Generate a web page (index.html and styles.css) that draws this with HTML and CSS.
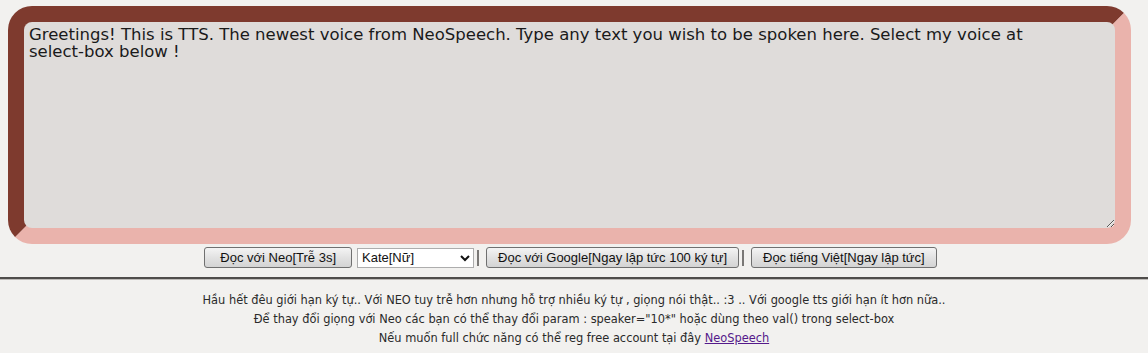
FILE: index.html
```html
<!DOCTYPE html>
<html lang="vi">
<head>
    <meta charset="UTF-8">
    <title>TTS NeoSpeech</title>
    <link rel="stylesheet" href="styles.css">
</head>
<body>
    <div class="wrap">
        <textarea id="text" class="tts-box">Greetings! This is TTS. The newest voice from NeoSpeech. Type any text you wish to be spoken here. Select my voice at select-box below !</textarea>
    </div>

    <div class="controls">
        <button type="button" class="btn btn-neo">Đọc với Neo[Trễ 3s]</button>
        <select class="voice">
            <option value="10">Kate[Nữ]</option>
            <option value="11">Paul[Nam]</option>
        </select>
        <span class="sep"></span>
        <button type="button" class="btn">Đọc với Google[Ngay lập tức 100 ký tự]</button>
        <span class="sep"></span>
        <button type="button" class="btn">Đọc tiếng Việt[Ngay lập tức]</button>
    </div>

    <hr class="line">

    <div class="notes">
        <p>Hầu hết đêu giới hạn ký tự.. Với NEO tuy trễ hơn nhưng hỗ trợ nhiều ký tự , giọng nói thật.. :3 .. Với google tts giới hạn ít hơn nữa..</p>
        <p>Để thay đổi giọng với Neo các bạn có thể thay đổi param : speaker="10*" hoặc dùng theo val() trong select-box</p>
        <p>Nếu muốn full chức năng có thể reg free account tại đây <a href="#">NeoSpeech</a></p>
    </div>
</body>
</html>
```

FILE: styles.css
```css
body {
    margin: 6px 0 0;
    background-color: #f2f1ef;
    font-family: "DejaVu Sans", Verdana, sans-serif;
    color: #222;
}
.wrap {
    padding-left: 8px;
}
.tts-box {
    display: block;
    box-sizing: border-box;
    width: 1123px;
    height: 238px;
    padding: 4px 40px 4px 5px;
    border: 16px solid;
    border-color: #7e3a2e #eab3ac #eab3ac #7e3a2e;
    border-radius: 24px;
    background-color: #dfdcda;
    color: #1a1a1a;
    font-family: "DejaVu Sans", Verdana, sans-serif;
    font-size: 16.5px;
    line-height: 17px;
    outline: none;
}
.controls {
    display: flex;
    justify-content: center;
    align-items: center;
    gap: 5px;
    margin-top: 3px;
    padding-right: 7px;
}
.btn {
    height: 21px;
    padding: 0 11px;
    border: 1px solid #707070;
    border-radius: 3px;
    background: linear-gradient(#f4f4f4, #e2e2e2 50%, #d4d4d4);
    font-family: "Liberation Sans", Arial, sans-serif;
    font-size: 13px;
    color: #111;
}
.btn-neo {
    padding: 0 15px;
}
.voice {
    width: 117px;
    height: 20px;
    border: 1px solid #adadad;
    background: #fff;
    font-family: "Liberation Sans", Arial, sans-serif;
    font-size: 13px;
    color: #111;
}
.sep {
    width: 2px;
    height: 16px;
    background-color: #7a7876;
    margin: 0 2px 0 -2px;
}
.line {
    margin: 9px 0 0;
    border: 0;
    border-top: 2px solid #4f4d4b;
    border-bottom: 1px solid #bdbab7;
}
.notes {
    text-align: center;
    font-size: 11.4px;
    color: #2a2a2a;
    padding-top: 11px;
}
.notes p {
    margin: 0;
    line-height: 19px;
}
.notes a {
    color: #551a8b;
}
```
